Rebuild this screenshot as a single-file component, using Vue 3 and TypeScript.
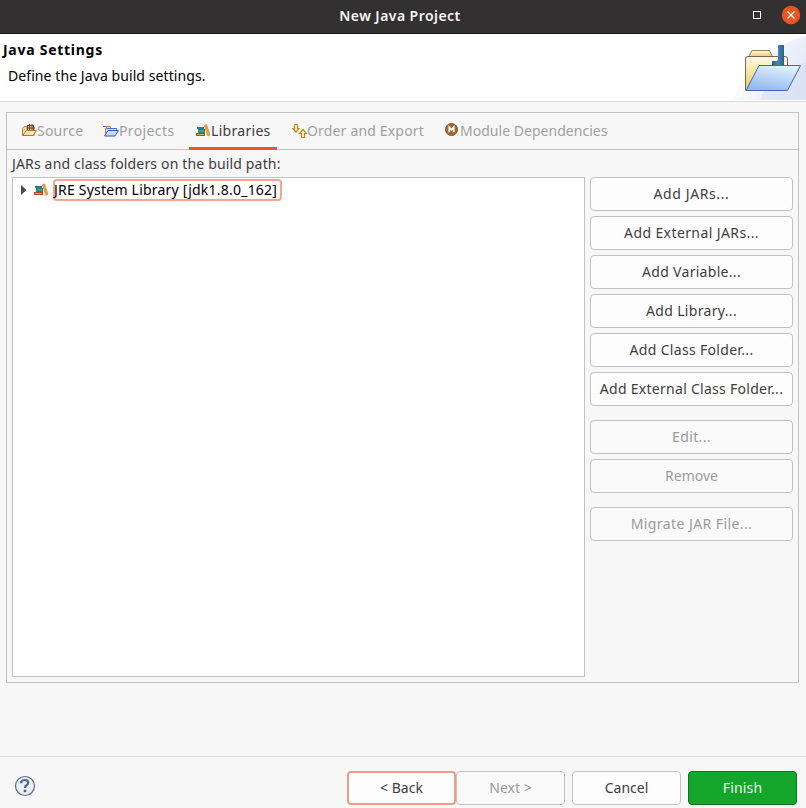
<script setup lang="ts">
import { ref } from 'vue'

interface Tab { id: string; label: string }
interface Action { label: string; cls: string; enabled: boolean }

const tabs: Tab[] = [
  { id: 'source', label: 'Source' },
  { id: 'projects', label: 'Projects' },
  { id: 'libraries', label: 'Libraries' },
  { id: 'order', label: 'Order and Export' },
  { id: 'modules', label: 'Module Dependencies' },
]
const active = ref('libraries')

const groups: Action[][] = [
  [
    { label: 'Add JARs...', cls: 'jars', enabled: true },
    { label: 'Add External JARs...', cls: 'ext-jars', enabled: true },
    { label: 'Add Variable...', cls: 'variable', enabled: true },
    { label: 'Add Library...', cls: 'library', enabled: true },
    { label: 'Add Class Folder...', cls: 'class-folder', enabled: true },
    { label: 'Add External Class Folder...', cls: 'ext-class-folder', enabled: true },
  ],
  [
    { label: 'Edit...', cls: 'edit', enabled: false },
    { label: 'Remove', cls: 'remove', enabled: false },
  ],
  [{ label: 'Migrate JAR File...', cls: 'migrate', enabled: false }],
]
</script>

<template>
  <div class="window">
    <header class="titlebar">
      <span class="title">New Java Project</span>
      <svg class="controls" width="60" height="33" viewBox="0 0 60 33">
        <rect x="7.5" y="11.5" width="7" height="7" fill="none" stroke="#fff" />
        <circle cx="45" cy="15" r="9.2" fill="#e95420" />
        <path d="M41.5 11.5l7 7M48.500 11.500l-7 7" stroke="#fff" stroke-width="1.3" />
      </svg>
    </header>

    <section class="banner">
      <div class="banner-text">
        <h1>Java Settings</h1>
        <p>Define the Java build settings.</p>
      </div>
      <svg class="banner-art" width="80" height="67" viewBox="0 0 80 67">
        <defs>
          <linearGradient id="sky" x1="0" y1="0.3" x2="1" y2="0.7">
            <stop offset="0" stop-color="#fff" />
            <stop offset="1" stop-color="#d3dcf2" />
          </linearGradient>
          <linearGradient id="back" x1="0" y1="0" x2="0" y2="1">
            <stop offset="0" stop-color="#fffbe8" />
            <stop offset="0.5" stop-color="#f5e49b" />
            <stop offset="1" stop-color="#e9c95c" />
          </linearGradient>
          <linearGradient id="front" x1="0.7" y1="0" x2="0.3" y2="1">
            <stop offset="0" stop-color="#e3f1fd" />
            <stop offset="1" stop-color="#8fb9ef" />
          </linearGradient>
          <linearGradient id="jay" x1="0" y1="0" x2="1" y2="0">
            <stop offset="0" stop-color="#225d8d" />
            <stop offset="0.5" stop-color="#4b85b0" />
            <stop offset="1" stop-color="#25608f" />
          </linearGradient>
        </defs>
        <path d="M80 2C55 7 14 35 8 66H80z" fill="url(#sky)" opacity="0.65" />
        <path d="M80 28C59 35 39 50 34 66H80z" fill="#d2dbf1" opacity="0.5" />
        <path d="M22.500 23l3.500-6.500h17.500l3 6.500" fill="url(#back)" stroke="#97815b" />
        <path d="M19.500 56V25q0-2.500 2.500-2.500h37q2.500 0 2.500 2.500V50L58 56z" fill="url(#back)" stroke="#805f55" />
        <path d="M52 11h6v20H46v-4h4q2 0 2-2z" fill="url(#jay)" />
        <path d="M20 56.500L33 31.500H74.500L61.500 56.500z" fill="url(#front)" stroke="#4565b5" />
      </svg>
    </section>

    <main class="content">
      <div class="folder">
        <nav class="tabs">
          <button v-for="t in tabs" :key="t.id" :class="['tab', t.id, { active: active === t.id }]" @click="active = t.id">
            <svg v-if="t.id === 'source'" width="16" height="16" viewBox="-1 0 16 16">
              <path d="M.5 12.500V5.500L2 3.500h3l1 1.500h6v7.500z" fill="#f4df9f" stroke="#b6772c" />
              <rect x="5.500" y="2.500" width="6" height="5" fill="#ecd0a4" stroke="#754525" />
              <path d="M7.500 1v7M10 1v7M4.500 5h8.500" stroke="#6e3c23" />
              <path d="M.8 12.500l3.500-5h10.200l-3.500 5z" fill="#fbe8ae" stroke="#b6772c" />
            </svg>
            <svg v-else-if="t.id === 'projects'" width="16" height="16" viewBox="0 0 16 16">
              <path d="M2.500 12.500V5.500h1v-2h4v2h6V8" fill="#f5dc99" stroke="#b78335" />
              <path d="M0 3.500h3.500M4 5.500h10" stroke="#4772bb" />
              <path d="M1.500 13l3.500-5.500h10.500l-3.500 5.500z" fill="#c2ddfb" stroke="#3159af" />
            </svg>
            <svg v-else-if="t.id === 'libraries'" width="16" height="16" viewBox="0 0 16 16">
              <path d="M2 4h7v2H2z" fill="#237ca1" /><path d="M3 6h7v4H3z" fill="#28865f" />
              <path d="M1 10h9v3H1z" fill="#ad4b25" /><path d="M4 8h5" stroke="#68b894" /><path d="M2 11.500h7" stroke="#dda26c" />
              <path d="M9.300 2.500l2.200-1 3.500 10.500-2.200 1z" fill="#eda438" stroke="#cc7b23" stroke-width=".6" />
            </svg>
            <svg v-else-if="t.id === 'order'" width="16" height="16" viewBox="-1 0 16 16">
              <path d="M2.500 1.500h3v4h1.500L4 9 .800 5.500h1.700z" fill="#fff6c7" stroke="#bd8721" stroke-width="1.200" />
              <path d="M9.500 14.500h3v-4h2L11 6.500l-3.500 4h2z" fill="#fff2b6" stroke="#bd8721" stroke-width="1.200" />
            </svg>
            <svg v-else width="16" height="16" viewBox="0 0 16 16">
              <circle cx="7.500" cy="6.500" r="6" fill="#a36b36" stroke="#815126" />
              <path d="M5.300 9.200v-5l2.200 2.600 2.200-2.600v5" fill="none" stroke="#fff" stroke-width="1.700" />
            </svg>
            <span class="tab-label">{{ t.label }}</span>
          </button>
        </nav>

        <div class="page">
          <div class="caption"><span>JARs and class folders on the build path:</span></div>
          <div class="columns">
            <div class="tree">
              <div class="node">
                <svg class="arrow" width="6" height="10" viewBox="0 0 6 10"><path d="M0 0l5.500 5L0 10z" fill="#4a4a4a" /></svg>
                <svg class="books" width="16" height="16" viewBox="0 0 16 16">
                  <path d="M2 4h7v2H2z" fill="#237ca1" /><path d="M3 6h7v4H3z" fill="#28865f" />
                  <path d="M1 10h9v3H1z" fill="#ad4b25" /><path d="M4 8h5" stroke="#68b894" /><path d="M2 11.500h7" stroke="#dda26c" />
                  <path d="M9.300 2.800l2.200-1 3.500 10.500-2.200 1z" fill="#eda438" stroke="#cc7b23" stroke-width=".6" />
                </svg>
                <span class="node-label"><span>JRE System Library [jdk1.8.0_162]</span></span>
              </div>
            </div>
            <div class="actions">
              <div v-for="(g, i) in groups" :key="i" class="group">
                <button v-for="a in g" :key="a.label" :class="['btn', a.cls]" :disabled="!a.enabled"><span>{{ a.label }}</span></button>
              </div>
            </div>
          </div>
        </div>
      </div>
    </main>

    <footer class="footer">
      <svg class="help" width="22" height="22" viewBox="0 0 22 22">
        <circle cx="11" cy="11" r="9.500" fill="#eeeff2" stroke="#586d93" stroke-width="1.2" />
        <path d="M7.300 8.200V6.500q1-1.500 3.500-1.500 3.500 0 3.500 2.800 0 1.400-1.800 2.500-1.500.9-1.500 2.700" fill="none" stroke="#4c648f" stroke-width="2.200" />
        <rect x="9.700" y="14.700" width="2.600" height="2.500" fill="#4c648f" />
      </svg>
      <div class="wizard">
        <button class="btn back"><span>&lt; Back</span></button>
        <button class="btn next" disabled><span>Next &gt;</span></button>
        <button class="btn cancel"><span>Cancel</span></button>
        <button class="btn finish"><span>Finish</span></button>
      </div>
    </footer>
  </div>
</template>

<style>
body { margin: 0; overflow: hidden; }
</style>

<style scoped>
.window { width: 806px; height: 808px; display: flex; flex-direction: column; background: #f7f7f7; color: #3d3d3d; font: 14px/20px "Noto Sans", "Open Sans", sans-serif; overflow: hidden; box-sizing: border-box; white-space: nowrap; }
.window * { box-sizing: border-box; }
.window svg { flex: none; display: block; }
button { font: inherit; color: inherit; margin: 0; letter-spacing: inherit; }

.titlebar { height: 34px; flex: none; display: grid; grid-template-columns: 60px 1fr 60px; background: #323030; border-bottom: 1px solid #1d1a1c; }
.title { grid-column: 2; text-align: center; line-height: 32px; font-weight: 600; color: #f7f7f7; padding-right: 6px; letter-spacing: 0.45px; }
.controls { grid-column: 3; }

.banner { height: 68px; flex: none; display: flex; justify-content: space-between; background: #fff; border-bottom: 1px solid #dcdcdc; color: #000; }
.banner-text { padding: 6px 0 0 3px; }
.banner h1 { margin: 0; font-size: 14px; line-height: 20px; font-weight: 700; letter-spacing: 0.73px; }
.banner p { margin: 6px 0 0 5px; letter-spacing: 0.08px; }

.content { flex: 1; padding: 10px 7px 73px 6px; display: flex; min-height: 0; }
.folder { flex: 1; border: 1px solid #c2c2c2; display: flex; flex-direction: column; }
.tabs { height: 37px; flex: none; border-bottom: 1px solid #c2c2c2; display: flex; padding-left: 6px; }
.tab { height: 37px; display: flex; align-items: center; border: 0; border-bottom: 3px solid transparent; background: none; padding: 2px 0 0 8px; color: #a0a0a0; }
.tab.active { color: #3d3d3d; border-bottom-color: #e95420; }
.tab.source { width: 81px; letter-spacing: 0.22px; }
.tab.projects { width: 95px; padding-left: 9px; letter-spacing: 0.38px; }
.tab.libraries { width: 88px; padding-left: 6px; letter-spacing: 0.3px; }
.tab.order { width: 154px; padding-left: 14px; letter-spacing: 0.17px; }
.tab.modules { width: 180px; padding-left: 13px; letter-spacing: 0.03px; }
.page { flex: 1; padding: 4px 5px 5px; display: flex; flex-direction: column; }
.caption { height: 23px; line-height: 20px; flex: none; letter-spacing: 0.16px; }
.columns { flex: 1; display: flex; gap: 5px; }
.tree { flex: 1; background: #fff; border: 1px solid #c2c2c2; padding: 1px 0 0 8px; }
.node { display: flex; align-items: center; color: #000; }
.books { margin-left: 6px; }
.node-label { margin-left: 4px; width: 229px; height: 22px; border: 2px solid #f3a68c; border-radius: 4px; line-height: 18px; letter-spacing: 0.22px; }
.node-label span { margin-left: -1px; }
.actions { width: 203px; display: flex; flex-direction: column; gap: 14px; }
.group { display: flex; flex-direction: column; gap: 5px; }
.btn { height: 34px; padding: 0; display: flex; align-items: center; justify-content: center; border: 1px solid #c2c2c2; border-radius: 4px; background: #fdfdfd; }
.btn:disabled { color: #9b9b9b; background: #fafafa; }
.jars { letter-spacing: 0.6px; }
.ext-jars { letter-spacing: 0.4px; }
.variable { letter-spacing: 0.3px; }
.library { letter-spacing: 0.33px; }
.class-folder { letter-spacing: 0.32px; }
.ext-class-folder { letter-spacing: 0.28px; }
.edit { letter-spacing: 0.35px; }
.migrate { letter-spacing: 0.42px; }

.footer { height: 52px; flex: none; border-top: 1px solid #dcdcdc; display: flex; justify-content: space-between; padding: 14px 9px 0 14px; }
.help { margin-top: 4px; }
.wizard { display: flex; }
.wizard .btn { width: 109px; }
.back { border: 2px solid #f09e83; }
.cancel, .finish { margin-left: 7px; }
.finish { background: #14a52b; border-color: #0d7520; color: #e9f8eb; letter-spacing: 0.15px; }
</style>
